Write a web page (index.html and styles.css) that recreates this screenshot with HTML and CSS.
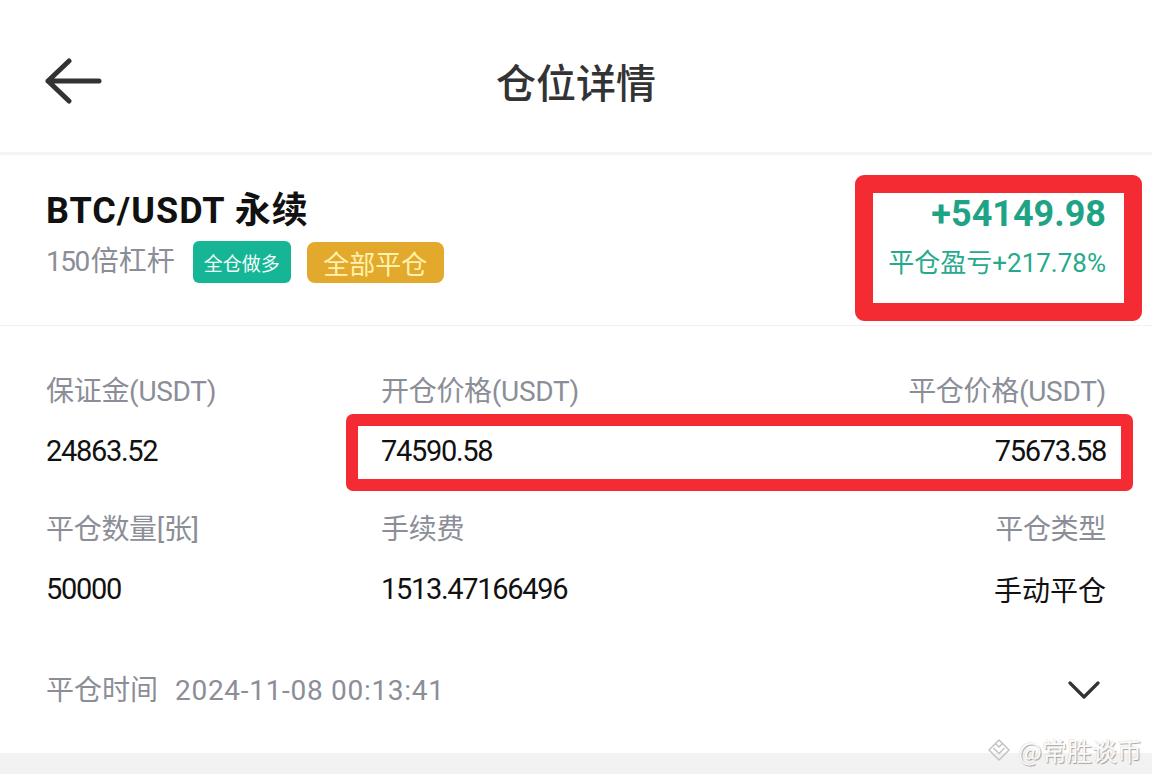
FILE: index.html
```html
<!DOCTYPE html>
<html lang="zh-CN">
<head>
<meta charset="utf-8">
<title>仓位详情</title>
<link rel="stylesheet" href="styles.css">
</head>
<body>
<div class="page">
  <header class="topbar">
    <span class="back">
      <svg width="58" height="46" viewBox="0 0 58 46" aria-hidden="true">
        <path d="M3 23 H54 M24 3 L3 23 L24 43" fill="none" stroke="#333" stroke-width="5" stroke-linecap="round" stroke-linejoin="round"/>
      </svg>
    </span>
    <h1 class="title">仓位详情</h1>
    <span></span>
  </header>

  <section class="summary">
    <div class="summary-left">
      <div class="pair">BTC/USDT 永续</div>
      <div class="sub">
        <span class="lever"><span class="lever-num">150</span>倍杠杆</span>
        <span class="tag tag-green">全仓做多</span>
        <span class="tag tag-gold">全部平仓</span>
      </div>
    </div>
    <div class="summary-right">
      <div class="pnl">+54149.98</div>
      <div class="pnl-rate">平仓盈亏+217.78%</div>
    </div>
  </section>

  <section class="details">
    <div class="cell">
      <div class="label">保证金(USDT)</div>
      <div class="value">24863.52</div>
    </div>
    <div class="cell">
      <div class="label">开仓价格(USDT)</div>
      <div class="value">74590.58</div>
    </div>
    <div class="cell cell-end">
      <div class="label">平仓价格(USDT)</div>
      <div class="value">75673.58</div>
    </div>
    <div class="cell">
      <div class="label">平仓数量[张]</div>
      <div class="value">50000</div>
    </div>
    <div class="cell">
      <div class="label">手续费</div>
      <div class="value">1513.47166496</div>
    </div>
    <div class="cell cell-end">
      <div class="label">平仓类型</div>
      <div class="value value-cjk">手动平仓</div>
    </div>
  </section>

  <section class="time-row">
    <div class="time"><span class="time-label">平仓时间</span><span class="time-value">2024-11-08 00:13:41</span></div>
    <svg class="chevron" width="32" height="20" viewBox="0 0 32 20" aria-hidden="true">
      <path d="M2 3 L16 17 L30 3" fill="none" stroke="#333" stroke-width="3.2" stroke-linecap="round" stroke-linejoin="round"/>
    </svg>
  </section>

  <div class="band"></div>

  <div class="mark mark-pnl"></div>
  <div class="mark mark-price"></div>

  <div class="watermark">
    <svg width="26" height="26" viewBox="0 0 26 26" aria-hidden="true">
      <path d="M13 3 L23 13 L13 23 L3 13 Z M7.5 11 L13 16.5 L18.5 11 M10 7 L13 10 L16 7" fill="none" stroke="#c4c4c4" stroke-width="1.6" stroke-linejoin="round"/>
    </svg>
    <span>@常胜谈币</span>
  </div>
</div>
</body>
</html>
```

FILE: styles.css
```css
* { box-sizing: border-box; }

html, body {
  margin: 0;
  padding: 0;
  background: #ffffff;
}

body {
  font-family: "Roboto", "Noto Sans CJK SC", sans-serif;
  color: #111;
}

.page {
  position: relative;
  width: 1152px;
  height: 774px;
  overflow: hidden;
  background: #fff;
}

/* Header */
.topbar {
  height: 155px;
  padding: 10px 48px 0;
  display: grid;
  grid-template-columns: 1fr auto 1fr;
  align-items: center;
  border-bottom: 3px solid #f4f4f4;
}

.back {
  display: flex;
  align-items: center;
  margin-left: -3px;
}

.title {
  margin: 0;
  font-family: "Noto Sans CJK SC", sans-serif;
  font-size: 40px;
  font-weight: 500;
  color: #333;
  line-height: 48px;
}

/* Summary */
.summary {
  height: 171px;
  padding: 0 46px;
  display: flex;
  justify-content: space-between;
  align-items: flex-start;
  border-bottom: 1px solid #f1f1f1;
}

.summary-left {
  padding-top: 35px;
}

.pair {
  font-family: "Roboto", "Noto Sans CJK SC", sans-serif;
  font-size: 36px;
  font-weight: 700;
  letter-spacing: 1px;
  line-height: 42px;
  color: #111;
}

.sub {
  margin-top: 9px;
  display: flex;
  align-items: center;
}

.lever {
  font-family: "Roboto", "Noto Sans CJK SC", sans-serif;
  font-size: 28px;
  color: #8b8e97;
  margin-right: 18px;
  line-height: 42px;
}

.lever-num {
  letter-spacing: -1.5px;
  margin-right: 2px;
}

.tag {
  display: inline-flex;
  align-items: center;
  justify-content: center;
  font-family: "Noto Sans CJK SC", sans-serif;
}

.tag-green {
  width: 98px;
  height: 42px;
  border-radius: 6px;
  background: #15b595;
  color: #f2fffb;
  font-size: 19px;
  margin-right: 16px;
}

.tag-gold {
  width: 137px;
  height: 41px;
  border-radius: 8px;
  background: #e3a92c;
  color: #fff2ad;
  font-size: 26px;
}

.summary-right {
  padding-top: 38px;
  text-align: right;
}

.pnl {
  font-family: "Roboto", sans-serif;
  font-size: 36px;
  font-weight: 700;
  line-height: 42px;
  color: #1fa386;
}

.pnl-rate {
  margin-top: 12px;
  font-family: "Roboto", "Noto Sans CJK SC", sans-serif;
  font-size: 26px;
  line-height: 32px;
  color: #26a98c;
}

/* Details grid */
.details {
  padding: 48px 46px 0;
  display: grid;
  grid-template-columns: 335px 1fr auto;
  row-gap: 43px;
}

.cell {
  display: flex;
  flex-direction: column;
  gap: 23px;
}

.cell-end {
  align-items: flex-end;
}

.label {
  font-family: "Roboto", "Noto Sans CJK SC", sans-serif;
  font-size: 28px;
  letter-spacing: -0.3px;
  line-height: 36px;
  color: #8b8e97;
}

.value {
  font-family: "Roboto", "Noto Sans CJK SC", sans-serif;
  font-size: 29px;
  letter-spacing: -1.3px;
  line-height: 36px;
  color: #111;
}

.value-cjk {
  font-family: "Noto Sans CJK SC", sans-serif;
  font-size: 28px;
  letter-spacing: 0;
}

/* Time row */
.time-row {
  padding: 63px 52px 0 46px;
  height: 146px;
  display: flex;
  justify-content: space-between;
  align-items: flex-start;
}

.time {
  font-family: "Roboto", "Noto Sans CJK SC", sans-serif;
  font-size: 28px;
  line-height: 36px;
  color: #8b8e97;
}

.time-label {
  font-family: "Noto Sans CJK SC", sans-serif;
  margin-right: 17px;
}

.time-value {
  letter-spacing: 0.7px;
}

.chevron {
  margin-top: 10px;
}

.band {
  height: 21px;
  background: #f2f2f2;
}

/* Annotation overlays */
.mark {
  position: absolute;
  border: solid #f42b32;
  pointer-events: none;
}

.mark-pnl {
  left: 855px;
  top: 175px;
  width: 287px;
  height: 146px;
  border-width: 18px;
  border-radius: 9px;
}

.mark-price {
  left: 346px;
  top: 414px;
  width: 787px;
  height: 77px;
  border-width: 12px;
  border-radius: 7px;
}

/* Watermark */
.watermark {
  position: absolute;
  right: 10px;
  bottom: 8px;
  display: flex;
  align-items: center;
  gap: 6px;
  font-family: "Noto Sans CJK SC", sans-serif;
  font-size: 25px;
  line-height: 32px;
  color: #fafafa;
  text-shadow: 1px 1px 1px rgba(0, 0, 0, 0.35), -1px -1px 0 rgba(0, 0, 0, 0.08);
}
```
